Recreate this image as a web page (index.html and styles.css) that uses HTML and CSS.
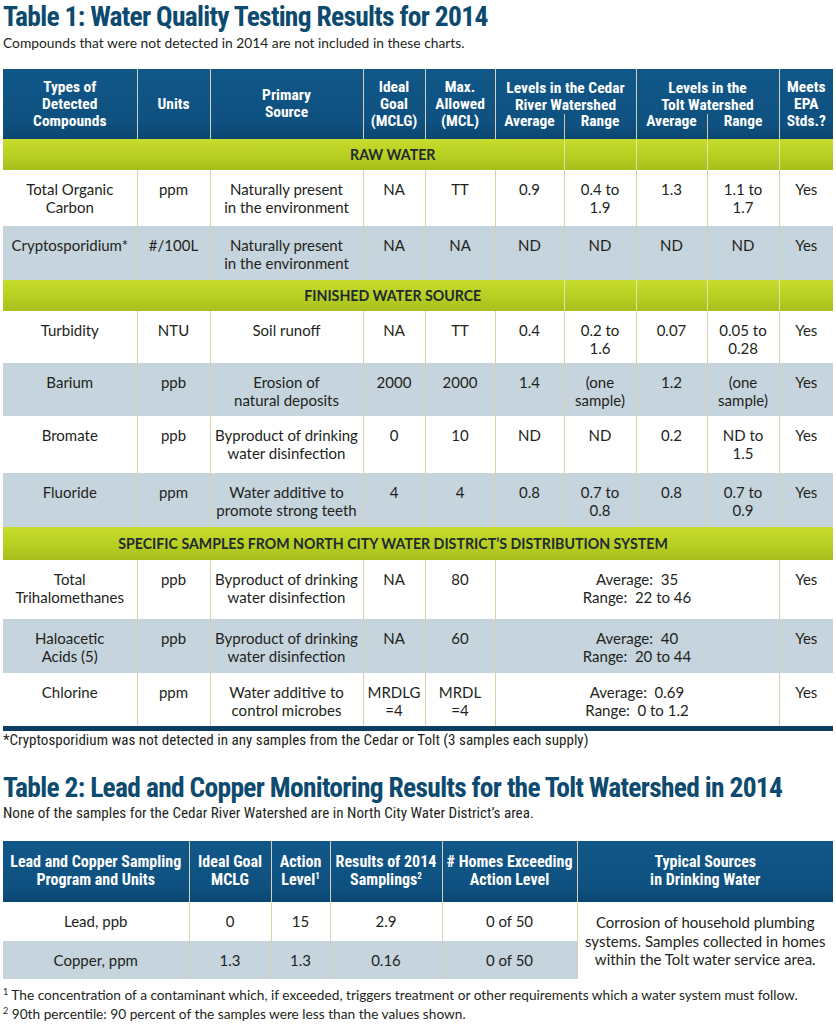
FILE: index.html
```html
<!DOCTYPE html>
<html lang="en">
<head>
<meta charset="utf-8">
<title>Water Quality Testing Results for 2014</title>
<link rel="stylesheet" href="styles.css">
</head>
<body>
<h1 class="title">Table 1: Water Quality Testing Results for 2014</h1>
<p class="intro">Compounds that were not detected in 2014 are not included in these charts.</p>

<table class="t1">
  <colgroup>
    <col class="a1"><col class="a2"><col class="a3"><col class="a4"><col class="a5">
    <col class="a6"><col class="a7"><col class="a8"><col class="a9"><col class="a10">
  </colgroup>
  <thead>
    <tr class="hr1">
      <th rowspan="2">Types of<br>Detected<br>Compounds</th>
      <th rowspan="2">Units</th>
      <th rowspan="2">Primary<br>Source</th>
      <th rowspan="2">Ideal<br>Goal<br>(MCLG)</th>
      <th rowspan="2">Max.<br>Allowed<br>(MCL)</th>
      <th colspan="2" class="grp">Levels in the Cedar<br>River Watershed</th>
      <th colspan="2" class="grp">Levels in the<br>Tolt Watershed</th>
      <th rowspan="2">Meets<br>EPA<br>Stds.?</th>
    </tr>
    <tr class="hr2">
      <th class="nosep">Average</th>
      <th class="subsep">Range</th>
      <th class="nosep">Average</th>
      <th class="subsep">Range</th>
    </tr>
  </thead>
  <tbody>
    <tr class="sec">
      <td colspan="6" class="sec-label">RAW WATER</td><td></td><td></td><td></td><td></td>
    </tr>
    <tr class="w h56">
      <td>Total Organic<br>Carbon</td><td>ppm</td><td>Naturally present<br>in the environment</td><td>NA</td><td>TT</td>
      <td>0.9</td><td>0.4 to<br>1.9</td><td>1.3</td><td>1.1 to<br>1.7</td><td>Yes</td>
    </tr>
    <tr class="g h54">
      <td>Cryptosporidium*</td><td>#/100L</td><td>Naturally present<br>in the environment</td><td>NA</td><td>NA</td>
      <td>ND</td><td>ND</td><td>ND</td><td>ND</td><td>Yes</td>
    </tr>
    <tr class="sec">
      <td colspan="6" class="sec-label">FINISHED WATER SOURCE</td><td></td><td></td><td></td><td></td>
    </tr>
    <tr class="w h52">
      <td>Turbidity</td><td>NTU</td><td>Soil runoff</td><td>NA</td><td>TT</td>
      <td>0.4</td><td>0.2 to<br>1.6</td><td>0.07</td><td>0.05 to<br>0.28</td><td>Yes</td>
    </tr>
    <tr class="g h53">
      <td>Barium</td><td>ppb</td><td>Erosion of<br>natural deposits</td><td>2000</td><td>2000</td>
      <td>1.4</td><td>(one<br>sample)</td><td>1.2</td><td>(one<br>sample)</td><td>Yes</td>
    </tr>
    <tr class="w h57">
      <td>Bromate</td><td>ppb</td><td>Byproduct of drinking<br>water disinfection</td><td>0</td><td>10</td>
      <td>ND</td><td>ND</td><td>0.2</td><td>ND to<br>1.5</td><td>Yes</td>
    </tr>
    <tr class="g h54">
      <td>Fluoride</td><td>ppm</td><td>Water additive to<br>promote strong teeth</td><td>4</td><td>4</td>
      <td>0.8</td><td>0.7 to<br>0.8</td><td>0.8</td><td>0.7 to<br>0.9</td><td>Yes</td>
    </tr>
    <tr class="sec sec-wide">
      <td colspan="10" class="sec-full">SPECIFIC SAMPLES FROM NORTH CITY WATER DISTRICT’S DISTRIBUTION SYSTEM</td>
    </tr>
    <tr class="w h59">
      <td>Total<br>Trihalomethanes</td><td>ppb</td><td>Byproduct of drinking<br>water disinfection</td><td>NA</td><td>80</td>
      <td colspan="4">Average:&nbsp; 35<br>Range:&nbsp; 22 to 46</td><td>Yes</td>
    </tr>
    <tr class="g h54">
      <td>Haloacetic<br>Acids (5)</td><td>ppb</td><td>Byproduct of drinking<br>water disinfection</td><td>NA</td><td>60</td>
      <td colspan="4">Average:&nbsp; 40<br>Range:&nbsp; 20 to 44</td><td>Yes</td>
    </tr>
    <tr class="w h55 last">
      <td>Chlorine</td><td>ppm</td><td>Water additive to<br>control microbes</td><td>MRDLG<br>=4</td><td>MRDL<br>=4</td>
      <td colspan="4">Average:&nbsp; 0.69<br>Range:&nbsp; 0 to 1.2</td><td>Yes</td>
    </tr>
  </tbody>
</table>
<p class="note">*Cryptosporidium was not detected in any samples from the Cedar or Tolt (3 samples each supply)</p>

<h2 class="title title2">Table 2: Lead and Copper Monitoring Results for the Tolt Watershed in 2014</h2>
<p class="note">None of the samples for the Cedar River Watershed are in North City Water District’s area.</p>

<table class="t2">
  <colgroup>
    <col class="b1"><col class="b2"><col class="b3"><col class="b4"><col class="b5"><col class="b6">
  </colgroup>
  <thead>
    <tr>
      <th>Lead and Copper Sampling<br>Program and Units</th>
      <th>Ideal Goal<br>MCLG</th>
      <th>Action<br>Level<sup>1</sup></th>
      <th>Results of 2014<br>Samplings<sup>2</sup></th>
      <th># Homes Exceeding<br>Action Level</th>
      <th>Typical Sources<br>in Drinking Water</th>
    </tr>
  </thead>
  <tbody>
    <tr class="w lead">
      <td>Lead, ppb</td><td>0</td><td>15</td><td>2.9</td><td>0 of 50</td>
      <td rowspan="2" class="sources">Corrosion of household plumbing<br>systems. Samples collected in homes<br>within the Tolt water service area.</td>
    </tr>
    <tr class="g copper">
      <td>Copper, ppm</td><td>1.3</td><td>1.3</td><td>0.16</td><td>0 of 50</td>
    </tr>
  </tbody>
</table>
<div class="foot">
  <p><sup>1</sup> The concentration of a contaminant which, if exceeded, triggers treatment or other requirements which a water system must follow.</p>
  <p><sup>2</sup> 90th percentile: 90 percent of the samples were less than the values shown.</p>
</div>
</body>
</html>
```

FILE: styles.css
```css
* { box-sizing: border-box; }

html, body { background: #ffffff; }

body {
  margin: 0;
  padding: 0 3px;
  width: 836px;
  font-family: Lato, "Liberation Sans", sans-serif;
  color: #231f20;
}

.title {
  margin: 0;
  font-family: "Roboto Condensed", "Open Sans Condensed", Lato, sans-serif;
  font-weight: 700;
  font-size: 27.5px;
  letter-spacing: -0.7px;
  line-height: 33px;
  color: #0d4a6f;
  white-space: nowrap;
}

.title2 { margin-top: 22px; }

.intro {
  margin: 0 0 16px;
  font-size: 13.8px;
  line-height: 20px;
  white-space: nowrap;
}

.note {
  margin: 0;
  font-family: "Roboto Condensed", "Open Sans Condensed", Lato, sans-serif;
  font-size: 15.1px;
  line-height: 18px;
  white-space: nowrap;
}

table {
  border-collapse: collapse;
  table-layout: fixed;
  width: 830px;
}

.a1 { width: 134px; } .a2 { width: 73px; } .a3 { width: 153px; } .a4 { width: 62px; }
.a5 { width: 70px; } .a6 { width: 69px; } .a7 { width: 72px; } .a8 { width: 71px; }
.a9 { width: 72px; } .a10 { width: 54px; }

.b1 { width: 186px; } .b2 { width: 82px; } .b3 { width: 59px; }
.b4 { width: 112px; } .b5 { width: 135px; } .b6 { width: 256px; }

th {
  color: #ffffff;
  font-family: "Roboto Condensed", "Open Sans Condensed", Lato, sans-serif;
  font-weight: 700;
  font-size: 15.5px;
  line-height: 17px;
  text-align: center;
  vertical-align: middle;
  white-space: nowrap;
  padding: 0 1px;
  background: #0f5282;
  border-left: 1px solid #d6d0b2;
}

th:first-child { border-left: none; }

.t1 thead tr.hr1 th,
.t2 thead th {
  background: linear-gradient(180deg, #105788 0%, #0e5180 75%, #0b4670 100%);
}

.t1 thead tr.hr1 th.grp { background: linear-gradient(180deg, #105788 0%, #0e5382 100%); }
.t1 thead tr.hr2 th { background: linear-gradient(180deg, #0e5382 0%, #0e5180 45%, #0b4670 100%); }

.hr1 { height: 45px; }
.hr2 { height: 25px; }

th.grp {
  vertical-align: bottom;
  padding-bottom: 0;
}

.hr2 th {
  vertical-align: top;
  line-height: 15px;
  padding: 0;
}

.hr2 th.nosep { border-left: 1px solid #d6d0b2; }
.hr2 th.subsep { border-left: 1px solid #cfc8a6; }

td {
  text-align: center;
  vertical-align: top;
  white-space: nowrap;
  padding: 10px 1px 0;
  font-size: 15px;
  line-height: 18px;
  border-left: 1px solid #d8d0ae;
}

td:first-child { border-left: none; }

tr.w td { background: #ffffff; }
tr.g td { background: #c5d4dd; }

.h52 { height: 52px; }
.h53 { height: 53px; }
.h54 { height: 54px; }
.h55 { height: 55px; }
.h56 { height: 56px; }
.h57 { height: 57px; }
.h59 { height: 59px; }

tr.sec { height: 31px; }
tr.sec-wide { height: 33px; }

tr.sec td {
  background: linear-gradient(180deg, #c6dc2e 0%, #b7ce22 55%, #a7bf1c 100%);
  padding: 0;
  vertical-align: middle;
  font-weight: 700;
  font-size: 14.2px;
  line-height: 18px;
  color: #1e2a30;
  border-left: 1px solid rgba(236, 238, 200, 0.75);
}

tr.sec td.sec-label {
  border-left: none;
  padding-left: 219px;
}

tr.sec td.sec-full {
  border-left: none;
  padding-right: 50px;
}

tr.last td { border-bottom: 5px solid #0c3e61; }

/* Table 2 */
.t2 { margin-top: 19px; }

.t2 thead tr { height: 61px; }

.t2 th {
  font-size: 16px;
  line-height: 18px;
}

.t2 th sup {
  font-size: 9px;
  line-height: 0;
  vertical-align: 6px;
}

.t2 td {
  vertical-align: middle;
  padding: 0 1px;
  font-size: 15px;
  line-height: 18px;
}

.t2 tr.lead { height: 39px; }
.t2 tr.copper { height: 38px; }

.t2 td.sources {
  background: #ffffff;
  line-height: 18.5px;
  padding-top: 2px;
}

.foot {
  margin-top: 6px;
}

.foot p {
  margin: 0;
  font-size: 13.7px;
  line-height: 19px;
  white-space: nowrap;
}

.foot sup {
  font-size: 9px;
  line-height: 0;
  vertical-align: 5px;
}
```
